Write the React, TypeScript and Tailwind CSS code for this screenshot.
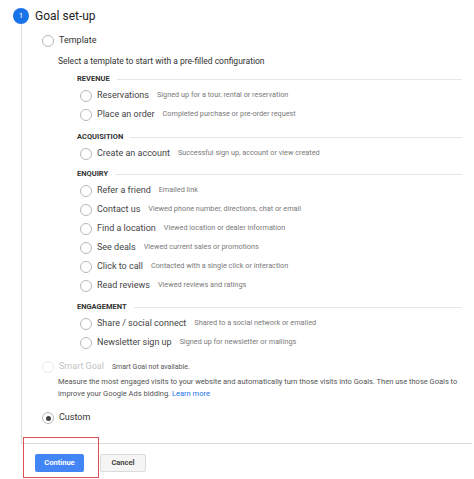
import React from 'react';

type Goal = { label: string; desc: string };

const sections: { title: string; items: Goal[]; mt: string }[] = [
  {
    title: 'Revenue',
    mt: 'mt-[4px]',
    items: [
      { label: 'Reservations', desc: 'Signed up for a tour, rental or reservation' },
      { label: 'Place an order', desc: 'Completed purchase or pre-order request' },
    ],
  },
  {
    title: 'Acquisition',
    mt: 'mt-[6px]',
    items: [{ label: 'Create an account', desc: 'Successful sign up, account or view created' }],
  },
  {
    title: 'Enquiry',
    mt: 'mt-[4px]',
    items: [
      { label: 'Refer a friend', desc: 'Emailed link' },
      { label: 'Contact us', desc: 'Viewed phone number, directions, chat or email' },
      { label: 'Find a location', desc: 'Viewed location or dealer information' },
      { label: 'See deals', desc: 'Viewed current sales or promotions' },
      { label: 'Click to call', desc: 'Contacted with a single click or interaction' },
      { label: 'Read reviews', desc: 'Viewed reviews and ratings' },
    ],
  },
  {
    title: 'Engagement',
    mt: 'mt-[5px]',
    items: [
      { label: 'Share / social connect', desc: 'Shared to a social network or emailed' },
      { label: 'Newsletter sign up', desc: 'Signed up for newsletter or mailings' },
    ],
  },
];

// kleiner Radio-Kreis
const Radio = ({ checked = false, disabled = false }: { checked?: boolean; disabled?: boolean }) => (
  <span
    className={`w-[12px] h-[12px] rounded-full border flex items-center justify-center shrink-0 ${
      disabled ? 'border-[#ececec]' : 'border-[#b9b9b9]'
    }`}
  >
    {checked && <span className="w-[5px] h-[5px] rounded-full bg-[#444]" />}
  </span>
);

export default function App() {
  return (
    <div
      className="w-[474px] h-[479px] bg-white overflow-hidden text-[#333]"
      style={{ fontFamily: 'Roboto, "Liberation Sans", sans-serif' }}
    >
      <div className="pl-[13px] pt-[8px]">
        {/* Schritt-Kopf */}
        <div className="flex items-center h-4">
          <span className="w-4 h-4 rounded-full bg-[#1a73e8] text-white text-[8px] flex items-center justify-center">
            1
          </span>
          <span className="ml-[6px] text-[12px] text-[#222]">Goal set-up</span>
        </div>

        <div className="ml-[8px] w-[451px] border-l border-b border-[#dcdcdc] pl-[20px] pt-[8px] pb-[16px]">
          <div className="h-[18px] flex items-center">
            <Radio />
            <span className="ml-[5px] text-[9px] text-[#333]">Template</span>
          </div>
          <div className="mt-[4px] h-[14px] flex items-center pl-[16px] text-[8.5px] text-[#333]">
            Select a template to start with a pre-filled configuration
          </div>

          {sections.map((s) => (
            <div key={s.title} className={s.mt}>
              <div className="h-[14px] flex items-center pl-[35px] mr-[10px]">
                <span className="text-[7.5px] font-bold uppercase text-[#333]">{s.title}</span>
                <span className="flex-1 h-px bg-[#e6e6e6] ml-[7px]" />
              </div>
              {s.items.map((it) => (
                <div key={it.label} className="h-[19px] flex items-center pl-[38px]">
                  <Radio />
                  <span className="ml-[5px] text-[9px] text-[#444]">{it.label}</span>
                  <span className="ml-[8px] text-[7.3px] text-[#7a7a7a]">{it.desc}</span>
                </div>
              ))}
            </div>
          ))}

          <div className="mt-[6px] h-[18px] flex items-center">
            <Radio disabled />
            <span className="ml-[5px] text-[9px] text-[#c4c4c4]">Smart Goal</span>
            <span className="ml-[8px] text-[7px] text-[#555]">Smart Goal not available.</span>
          </div>
          <p className="pl-[16px] w-[420px] text-[7.5px] leading-[12px] text-[#555]">
            Measure the most engaged visits to your website and automatically turn those visits into Goals. Then use
            those Goals to improve your Google Ads bidding. <span className="text-[#1a73e8]">Learn more</span>
          </p>

          <div className="mt-[9px] h-[18px] flex items-center">
            <Radio checked />
            <span className="ml-[5px] text-[9px] text-[#333]">Custom</span>
          </div>
        </div>

        {/* Buttons */}
        <div className="relative mt-[10px] ml-[22px] flex items-center">
          <button className="w-[49px] h-[18px] rounded-[2px] bg-[#4285f4] text-white text-[7.5px] font-bold">
            Continue
          </button>
          <button className="ml-[16px] w-[46px] h-[18px] rounded-[2px] bg-[#f5f5f5] border border-[#dcdcdc] text-[#444] text-[7.5px] font-bold">
            Cancel
          </button>
          <div className="absolute left-[-12px] top-[-17px] w-[76px] h-[41px] border border-[#e0505a]" />
        </div>
      </div>
    </div>
  );
}
